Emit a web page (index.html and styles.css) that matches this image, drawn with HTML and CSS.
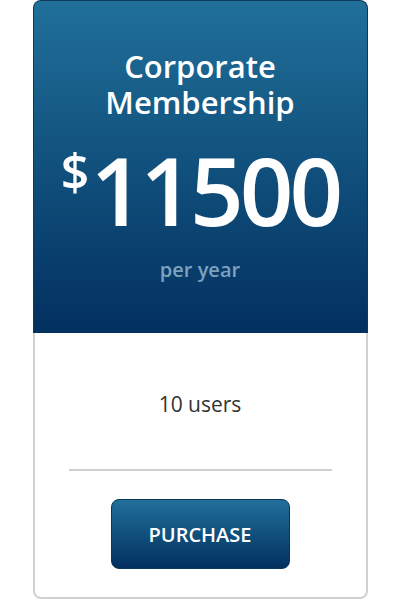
FILE: index.html
```html
<!DOCTYPE html>
<html lang="en">
<head>
  <meta charset="UTF-8">
  <title>Corporate Membership</title>
  <meta name="viewport" content="width=device-width, initial-scale=1.0">
  <link rel="stylesheet" href="styles.css">
</head>
<body>
<div class="plan">
  <div class="plan-head">
    <h2 class="plan-title">Corporate Membership</h2>
    <div class="plan-price"><span class="currency">$</span>11500</div>
    <div class="plan-period">per year</div>
  </div>
  <div class="plan-body">
    <p class="plan-feature">10 users</p>
    <hr class="plan-divider">
    <button class="purchase-button" type="button">PURCHASE</button>
  </div>
</div>
</body>
</html>
```

FILE: styles.css
```css
body {
  margin: 0;
  background-color: #fff;
  font-family: "Open Sans", "Noto Sans", sans-serif;
}
.plan {
  width: 335px;
  margin: 0 auto;
}
.plan-head {
  background: linear-gradient(to bottom, #20709a, #02305f);
  border: 1px solid #0c3a5c;
  border-bottom: none;
  border-radius: 8px 8px 0 0;
  padding: 47px 10px 49px;
  text-align: center;
  color: #fff;
}
.plan-title {
  margin: 0;
  font-size: 31px;
  font-weight: 600;
  line-height: 36px;
}
.plan-price {
  margin-top: 23px;
  font-size: 94px;
  line-height: 94px;
  font-weight: 600;
  letter-spacing: -4px;
}
.currency {
  display: inline-block;
  vertical-align: top;
  margin-top: 3px;
  margin-right: 1px;
  font-size: 50px;
  line-height: 50px;
  font-weight: 600;
  letter-spacing: 0;
}
.plan-period {
  margin-top: 19px;
  font-size: 20px;
  line-height: 28px;
  font-weight: 600;
  color: #7da2bf;
}
.plan-body {
  border: 2px solid #d0d0d0;
  border-top: none;
  border-radius: 0 0 8px 8px;
  padding: 57px 34px 28px;
  text-align: center;
}
.plan-feature {
  margin: 0;
  font-size: 21px;
  line-height: 28px;
  color: #333;
}
.plan-divider {
  margin: 51px 0 0;
  border: none;
  height: 2px;
  background-color: #d0d0d0;
}
.purchase-button {
  margin-top: 28px;
  width: 179px;
  height: 70px;
  border: 1px solid #0b3559;
  border-radius: 8px;
  background: linear-gradient(to bottom, #20709a, #02305f);
  color: #fff;
  font-family: "Open Sans", "Noto Sans", sans-serif;
  font-size: 20px;
  font-weight: 600;
}
```
